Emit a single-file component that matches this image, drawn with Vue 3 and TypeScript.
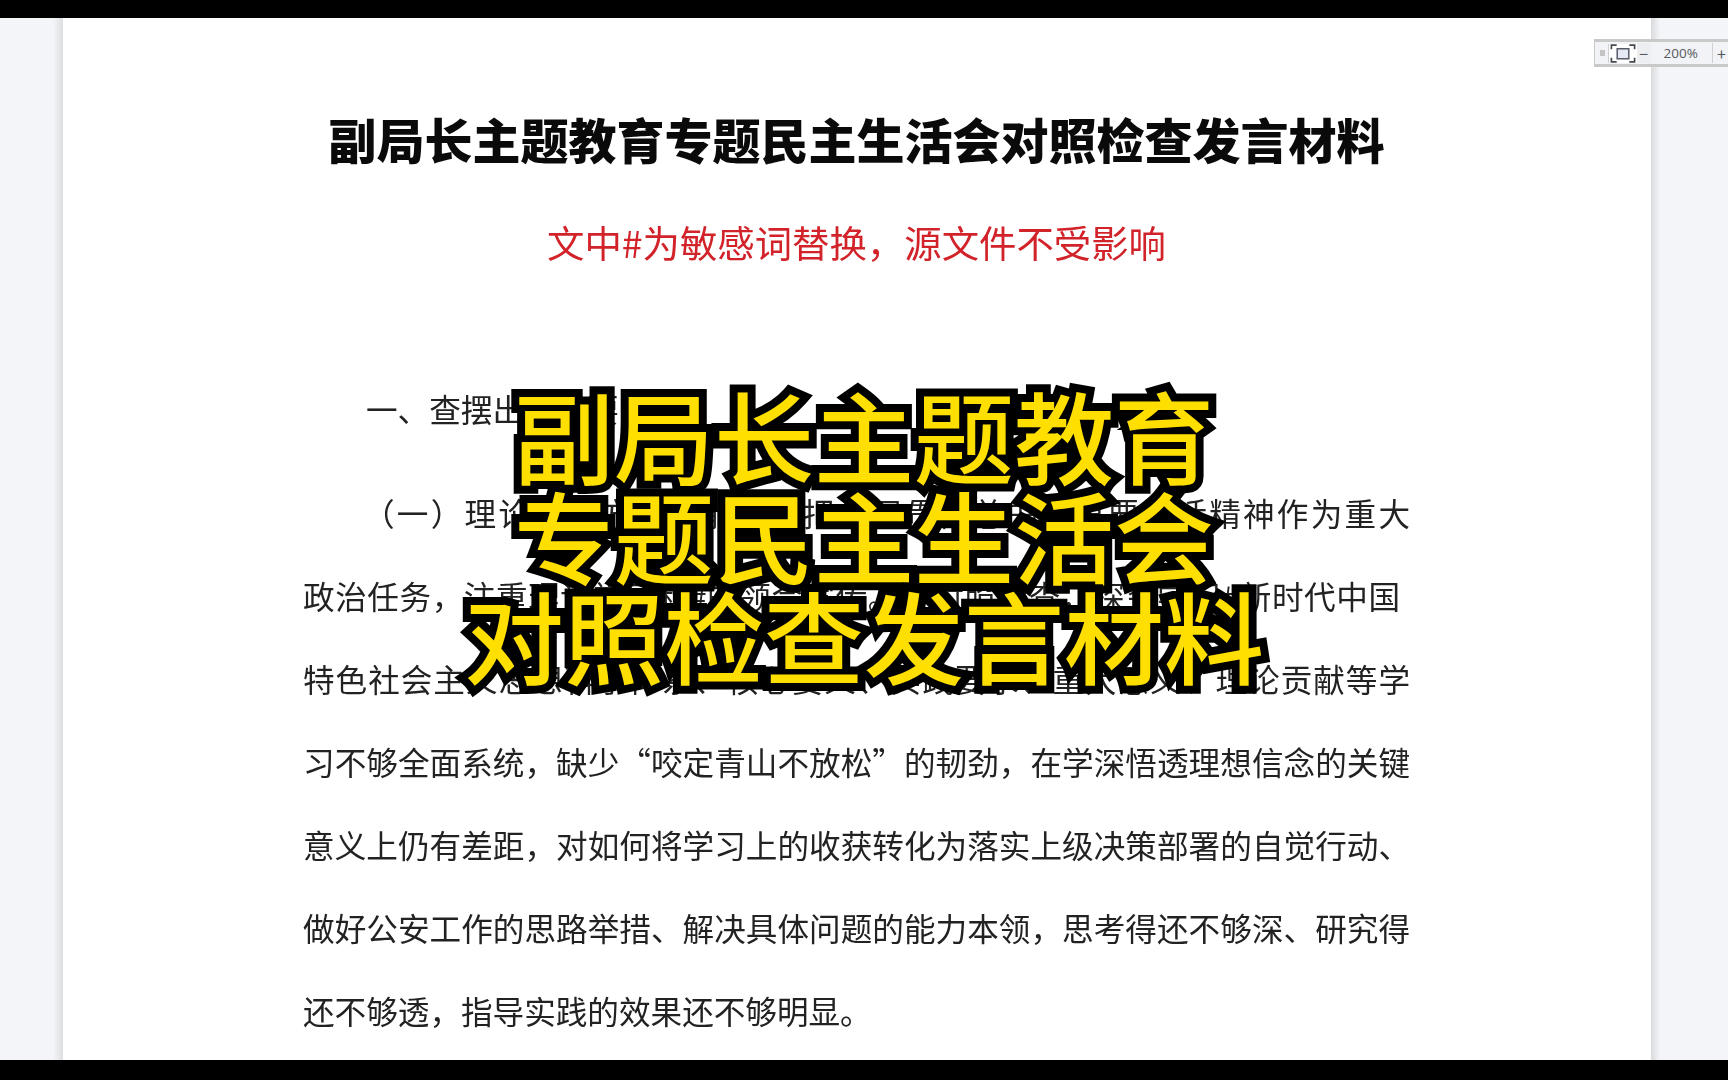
<script setup lang="ts">
const comma = '\uFF0C'
const open = '\uFF08'
const close = '\uFF09'
const notice = `文中#为敏感词替换${comma}源文件不受影响`
const lastLine = `还不够透${comma}指导实践的效果还不够明显。`
const bodyLines = [
  { text: `${open}一${close}理论学习方面。能坚持把学习贯彻总书记重要讲话精神作为重大`, cls: 'indent' },
  { text: `政治任务${comma}注重理论学习和#的领会宣传。但对照检查${comma}探究学习#新时代中国`, cls: 'short' },
  { text: '特色社会主义思想科学体系、核心要义、实践要求、重大意义、理论贡献等学', cls: '' },
  { text: `习不够全面系统${comma}缺少“咬定青山不放松”的韧劲${comma}在学深悟透理想信念的关键`, cls: '' },
  { text: `意义上仍有差距${comma}对如何将学习上的收获转化为落实上级决策部署的自觉行动、`, cls: '' },
  { text: `做好公安工作的思路举措、解决具体问题的能力本领${comma}思考得还不够深、研究得`, cls: '' },
]
const overlayLines = ['副局长主题教育', '专题民主生活会', '对照检查发言材料']
</script>

<template>
  <div class="screen" lang="zh-CN">
    <div class="bar"></div>
    <div class="viewer">
      <div class="side side-left"></div>
      <main class="paper">
        <h1 class="title">副局长主题教育专题民主生活会对照检查发言材料</h1>
        <p class="notice">{{ notice }}</p>
        <p class="line heading">一、查摆出的主要问题</p>
        <p v-for="line in bodyLines" :key="line.text" class="line full" :class="line.cls">{{ line.text }}</p>
        <p class="line">{{ lastLine }}</p>
      </main>
      <div class="side side-right"></div>
    </div>
    <div class="bar bar-bottom"></div>

    <div class="toolbar">
      <span class="grip"></span>
      <svg class="fit" viewBox="0 0 24 18" width="26" height="19" fill="none">
        <path d="M1 5V1h5M18 1h5v4M23 13v4h-5M6 17H1v-4" stroke="#44484f" stroke-width="1.6" />
        <rect x="6.5" y="4.5" width="11" height="9.5" fill="#e6e8f4" stroke="#555a66" stroke-width="1.4" />
      </svg>
      <span class="zoom-btn">−</span>
      <span class="zoom-val">200%</span>
      <span class="zoom-btn plus">+</span>
    </div>

    <div class="overlay">
      <div v-for="text in overlayLines" :key="text" class="overlay-line">{{ text }}</div>
    </div>
  </div>
</template>

<style scoped>
.screen {
  position: relative;
  width: 1728px;
  height: 1080px;
  display: flex;
  flex-direction: column;
  overflow: hidden;
  background: #000;
  font-family: "Noto Sans CJK SC", "Liberation Sans", sans-serif;
}
.bar {
  height: 18px;
  flex: none;
  background: #000;
}
.bar-bottom {
  height: 20px;
}
.viewer {
  flex: 1;
  display: flex;
  min-height: 0;
}
.side {
  flex: none;
  background: #f4f5f8;
}
.side-left {
  width: 63px;
  background: linear-gradient(90deg, #f4f5f8 0, #f4f5f8 53px, #dcdee0 63px);
}
.side-right {
  width: 77px;
  background: linear-gradient(90deg, #d9dadc 0, #f4f5f8 9px);
}
.paper {
  flex: 1;
  min-width: 0;
  background: #fff;
  overflow: hidden;
  padding: 84px 241px 0 240px;
  color: #222;
  filter: blur(0.4px);
}
.title {
  margin: 0 -40px;
  font-size: 48px;
  line-height: 72px;
  font-weight: 900;
  text-align: center;
  color: #0a0a0a;
  white-space: nowrap;
}
.notice {
  margin: 40px 0 97px;
  font-size: 37.4px;
  line-height: 56px;
  text-align: center;
  color: #d2232a;
  white-space: nowrap;
}
.line {
  margin: 0;
  font-size: 31.6px;
  line-height: 83px;
  white-space: normal;
}
.heading {
  padding-left: 63px;
  margin-bottom: 21px;
}
.full {
  text-align: justify;
  text-align-last: justify;
}
.indent {
  padding-left: 60px;
}
.short {
  padding-right: 10px;
}
.toolbar {
  position: absolute;
  left: 1594px;
  top: 39px;
  width: 134px;
  height: 28px;
  box-sizing: border-box;
  display: flex;
  align-items: center;
  background: #f2f3f6;
  border: 1px solid #c9c9c9;
  border-top-width: 3px;
  border-bottom-width: 3px;
  border-right: none;
  color: #55585e;
}
.grip {
  width: 5px;
  height: 6px;
  margin: 0 2px 0 5px;
  background: #c4c4c4;
}
.fit {
  flex: none;
  margin-left: 1px;
  padding: 0 1px;
  border-left: 1px solid #d0d0d0;
  background: #fff;
}
.zoom-btn {
  width: 15px;
  text-align: center;
  font-size: 16px;
  line-height: 20px;
  background: #eceef1;
}
.zoom-val {
  width: 65px;
  text-align: center;
  font-size: 13.5px;
  line-height: 20px;
  font-family: "Open Sans", "Liberation Sans", sans-serif;
}
.plus {
  margin-left: 1px;
  width: 14px;
  padding-left: 2px;
  border-left: 1px solid #d0d0d0;
  background: transparent;
}
.overlay {
  position: absolute;
  left: 0;
  right: 0;
  top: 384px;
  text-align: center;
}
.overlay-line {
  font-size: 100px;
  line-height: 100px;
  font-weight: 500;
  color: #ffdf00;
  -webkit-text-stroke: 16px #000;
  paint-order: stroke fill;
  white-space: nowrap;
}
</style>
